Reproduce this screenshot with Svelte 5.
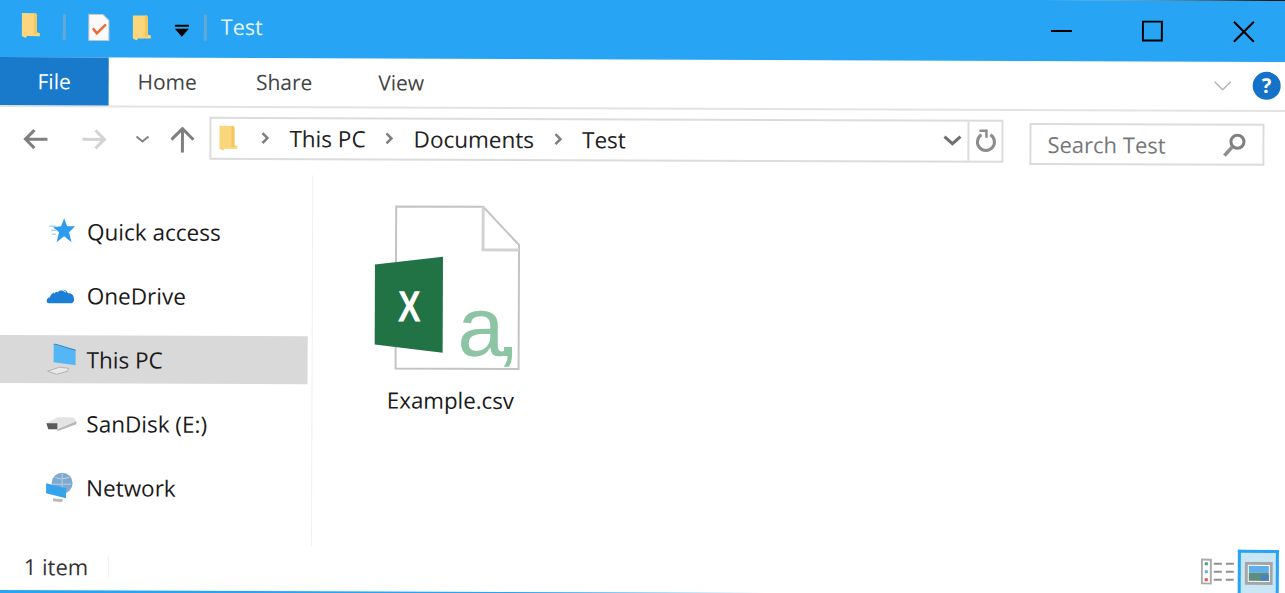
<script>
	const tabs = ['Home', 'Share', 'View'];
	const crumbs = ['This PC', 'Documents', 'Test'];
	const nav = [
		{ label: 'Quick access', icon: 'star' },
		{ label: 'OneDrive', icon: 'cloud' },
		{ label: 'This PC', icon: 'pc', selected: true },
		{ label: 'SanDisk (E:)', icon: 'drive' },
		{ label: 'Network', icon: 'net' }
	];
</script>

{#snippet folder(w, h)}
	<svg width={w} height={h} viewBox="0 0 20 26">
		<path d="M1 1h14l1 2v17l3 1v3H6l-1 2-4-2z" fill="#fbd67c" />
		<path d="M13 1h2l1 2v19h-3z" fill="#f4c65e" />
	</svg>
{/snippet}

{#snippet navIcon(name)}
	{#if name === 'star'}
		<svg width="30" height="28" viewBox="0 0 30 28">
			<path d="M18 1l3 8 8 0-6 6 2.500 10-7.500-6-7.500 6 2.500-10-6-5 8-1z" fill="#2d9cee" />
			<path d="M3 9h7M5 13h5M6 17h4" stroke="#a9d7f7" stroke-width="1.500" />
		</svg>
	{:else if name === 'cloud'}
		<svg width="30" height="20" viewBox="0 0 30 20">
			<path d="M3 18c-3 0-3-5 1-6 1-4 5-6 8-5 3-4 9-3 10 1 4 0 6 2 6 5 1 3-1 5-3 5z" fill="#1b7fd8" />
			<path d="M8 8c3-4 8-5 12-1" fill="none" stroke="#fff" stroke-width="1" />
		</svg>
	{:else if name === 'pc'}
		<svg width="32" height="32" viewBox="0 0 32 32">
			<path d="M8 1l22 6v15L8 19z" fill="#55b6f5" />
			<path d="M8 1l2 0 20 6" stroke="#2d85c4" fill="none" />
			<path d="M2 28l12-4 9 1-1 3-11 3z" fill="#e9e9e9" stroke="#a9a9a9" stroke-width=".8" />
		</svg>
	{:else if name === 'drive'}
		<svg width="32" height="18" viewBox="0 0 32 18">
			<path d="M1 9l11-6h16l3 4-19 8H4z" fill="#e4e4e4" />
			<path d="M1 9h11v6H3z" fill="#5a5a5a" />
			<path d="M12 15l19-8v3l-19 7z" fill="#b8b8b8" />
		</svg>
	{:else}
		<svg width="30" height="30" viewBox="0 0 30 30">
			<circle cx="17" cy="11" r="10.500" fill="#7fa9cf" />
			<path d="M10 5c4 2 9 2 14 0M7 12h19M17 1v20" stroke="#b4cde3" fill="none" />
			<path d="M1 11l20 5v10L1 21z" fill="#34a3ee" />
			<path d="M8 26l10 1-1 3-9-1z" fill="#b9b9b9" />
		</svg>
	{/if}
{/snippet}

<div class="window">
	<header class="titlebar">
		<span class="qa-folder">{@render folder(20, 26)}</span>
		<i class="sep first"></i>
		<svg class="props" width="24" height="28" viewBox="0 0 24 28">
			<path d="M2 1h14l6 6v20H2z" fill="#fafafa" stroke="#c8c8c8" />
			<path d="M6 15l4 5 9-9" fill="none" stroke="#ef6b35" stroke-width="2.500" />
		</svg>
		<span class="qa-folder second">{@render folder(20, 26)}</span>
		<svg class="dropdown" width="16" height="14" viewBox="0 0 16 14">
			<path d="M1 1h14v2H1zM1 5h14l-7 8z" fill="#000" />
		</svg>
		<i class="sep"></i>
		<span class="title">Test</span>
		<div class="controls">
			<svg width="22" height="4" viewBox="0 0 22 4"><path d="M0 2h21" stroke="#000" stroke-width="2" /></svg>
			<svg width="22" height="22" viewBox="0 0 22 22"><rect x="1" y="1" width="19" height="19" fill="none" stroke="#000" stroke-width="2" /></svg>
			<svg width="22" height="22" viewBox="0 0 22 22"><path d="M1 1l20 20M21 1L1 21" stroke="#000" stroke-width="2" /></svg>
		</div>
	</header>

	<nav class="ribbon">
		<div class="file-tab">File</div>
		{#each tabs as tab}
			<div class="tab">{tab}</div>
		{/each}
		<svg class="collapse" width="18" height="10" viewBox="0 0 18 10">
			<path d="M1 1l8 8 8-8" fill="none" stroke="#b5b5b5" stroke-width="1.500" />
		</svg>
		<div class="help">?</div>
	</nav>

	<div class="addressrow">
		<svg width="26" height="22" viewBox="0 0 26 22" class="arrow back">
			<path d="M25 11H3M12 2l-9 9 9 9" fill="none" stroke="#7f7f7f" stroke-width="3" />
		</svg>
		<svg width="26" height="22" viewBox="0 0 26 22" class="arrow forward">
			<path d="M1 11h22M14 2l9 9-9 9" fill="none" stroke="#d4d4d4" stroke-width="3" />
		</svg>
		<svg width="14" height="8" viewBox="0 0 14 8" class="arrow recent">
			<path d="M1 1l6 5 6-5" fill="none" stroke="#808080" stroke-width="2" />
		</svg>
		<svg width="24" height="26" viewBox="0 0 24 26" class="arrow up">
			<path d="M12 26V3M1 13L12 2l11 11" fill="none" stroke="#7f7f7f" stroke-width="3" />
		</svg>
		<div class="address">
			<span class="addr-folder">{@render folder(20, 26)}</span>
			{#each crumbs as crumb}
				<svg class="chev" width="10" height="12" viewBox="0 0 10 12"><path d="M2 1l5 5-5 5" fill="none" stroke="#7f7f7f" stroke-width="2.500" /></svg>
				<span class="crumb">{crumb}</span>
			{/each}
			<svg class="addr-drop" width="20" height="12" viewBox="0 0 20 12">
				<path d="M2 2l8 7 8-7" fill="none" stroke="#6f6f6f" stroke-width="3" />
			</svg>
			<div class="refresh">
				<svg width="22" height="24" viewBox="0 0 22 24">
					<path d="M7 6a8.500 8.500 0 1 0 9 0" fill="none" stroke="#8c8c8c" stroke-width="3" />
					<path d="M5 2h7v7" fill="none" stroke="#8c8c8c" stroke-width="2.500" />
				</svg>
			</div>
		</div>
		<div class="search">
			<span>Search Test</span>
			<svg width="24" height="26" viewBox="0 0 24 26">
				<circle cx="15" cy="10" r="6.500" fill="none" stroke="#7f7f7f" stroke-width="3" />
				<path d="M10 15l-8 9" stroke="#8f8f8f" stroke-width="3.500" />
			</svg>
		</div>
	</div>

	<main class="body">
		<aside class="sidebar">
			{#each nav as item}
				<div class="nav-item" class:selected={item.selected}>
					<span class="nav-icon">{@render navIcon(item.icon)}</span>
					<span>{item.label}</span>
				</div>
			{/each}
		</aside>
		<section class="files">
			<div class="file">
				<svg width="150" height="180" viewBox="0 0 150 180">
					<path d="M24 5h87l36 38v124H24z" fill="#fff" stroke="#c4c4c4" stroke-width="2" />
					<path d="M111 5v43h36" fill="none" stroke="#d2d2d2" stroke-width="3" />
					<path d="M3 63l68-8v96l-68-8z" fill="#217346" />
					<text x="26" y="120" textLength="23" lengthAdjust="spacingAndGlyphs" class="xl">X</text>
					<text x="86" y="154" class="glyph">a,</text>
				</svg>
				<div class="file-name">Example.csv</div>
			</div>
		</section>
	</main>

	<footer class="status">
		<span class="count">1 item</span>
		<i class="status-sep"></i>
		<div class="views">
			<svg class="list-view" width="34" height="28" viewBox="0 0 34 28">
				<rect x="1" y="3" width="9" height="24" fill="#fff" stroke="#aaa" stroke-width="2" />
				<path d="M4 7h3" stroke="#4d9a78" stroke-width="3" />
				<path d="M4 15h3" stroke="#6aa7ee" stroke-width="3" />
				<path d="M4 23h3" stroke="#e64a4a" stroke-width="3" />
				<path d="M13 7h8M25 7h8M13 15h8M25 15h8M13 23h8M25 23h8" stroke="#909090" stroke-width="2" />
			</svg>
			<div class="view-active">
				<svg width="28" height="24" viewBox="0 0 28 24">
					<rect x="1.500" y="1.500" width="25" height="20" fill="#fff" stroke="#a5a5a5" stroke-width="3" />
					<rect x="4" y="4" width="20" height="7" fill="#5fb0e8" />
					<rect x="4" y="11" width="20" height="8" fill="#5f8d7f" />
					<rect x="16" y="13" width="8" height="6" fill="#4a83bb" />
				</svg>
			</div>
		</div>
	</footer>
	<div class="bottom-edge"></div>
</div>

<style>
	:global(html),
	:global(body) {
		margin: 0;
		height: 100%;
		overflow: hidden;
		background: #111;
	}

	/* the screenshot sits slightly crooked, right side lower */
	.window {
		width: 1292px;
		height: 598px;
		transform-origin: 0 0;
		transform: translateY(-4px) rotate(0.22deg);
		display: flex;
		flex-direction: column;
		font-family: 'Open Sans', 'Noto Sans', sans-serif;
		color: #1a1a1a;
		background: #fff;
	}

	.titlebar {
		height: 61px;
		flex: none;
		display: flex;
		align-items: center;
		padding-left: 21px;
		box-sizing: border-box;
		background: #27a4f3;
	}

	.qa-folder {
		display: flex;
		margin-top: -3px;
	}

	.qa-folder.second {
		margin-left: 21px;
		margin-top: 0;
	}

	.sep {
		width: 3px;
		height: 26px;
		margin-left: 14px;
		background: #63a9d8;
	}

	.sep.first {
		margin-left: 22px;
	}

	.props {
		margin-left: 21px;
		margin-top: 1px;
	}

	.dropdown {
		margin-left: 22px;
		margin-top: 7px;
	}

	.title {
		margin-left: 14px;
		margin-top: -3px;
		font-size: 21.500px;
		color: #e3f3ff;
	}

	.controls {
		margin-left: auto;
		display: flex;
		align-items: center;
		gap: 69px;
		padding-right: 37px;
	}

	.ribbon {
		height: 50px;
		flex: none;
		display: flex;
		align-items: center;
		box-sizing: border-box;
		border-bottom: 2px solid #e3e3e3;
		font-size: 21px;
		color: #444;
	}

	.file-tab {
		width: 109px;
		height: 48px;
		display: flex;
		align-items: center;
		justify-content: center;
		background: #1979ca;
		color: #fff;
	}

	.tab {
		width: 117px;
		text-align: center;
	}

	.tab:last-of-type {
		margin-left: -12px;
	}

	.collapse {
		margin-left: auto;
		margin-right: 21px;
	}

	.help {
		width: 28px;
		height: 28px;
		margin-right: 11px;
		border-radius: 50%;
		background: #1472c8;
		color: #fff;
		text-align: center;
		font-weight: 700;
		font-size: 20px;
		line-height: 28px;
	}

	.addressrow {
		height: 60px;
		flex: none;
		display: flex;
		align-items: center;
		padding: 0 21px 0 23px;
		box-sizing: border-box;
	}

	.arrow {
		margin-top: 4px;
	}

	.forward {
		margin-left: 33px;
	}

	.recent {
		margin-left: 28px;
	}

	.up {
		margin-left: 21px;
	}

	.address {
		margin-left: 15px;
		width: 794px;
		height: 43px;
		box-sizing: border-box;
		border: 2px solid #dcdcdc;
		display: flex;
		align-items: center;
		font-size: 22.500px;
		color: #222;
	}

	.addr-folder {
		display: flex;
		margin-left: 7px;
		margin-right: 22px;
	}

	.chev {
		flex: none;
	}

	.crumb {
		margin: 0 19px;
	}

	.addr-drop {
		margin-left: auto;
		margin-right: 5px;
	}

	.refresh {
		width: 32px;
		height: 100%;
		display: flex;
		align-items: center;
		justify-content: center;
		border-left: 2px solid #dcdcdc;
	}

	.search {
		margin-left: 26px;
		width: 235px;
		height: 42px;
		margin-top: 5px;
		box-sizing: border-box;
		border: 2px solid #dcdcdc;
		display: flex;
		align-items: center;
		justify-content: space-between;
		padding: 0 16px;
		font-size: 22px;
		color: #777;
	}

	.body {
		flex: none;
		height: 378px;
		display: flex;
	}

	.sidebar {
		width: 314px;
		flex: none;
		box-sizing: border-box;
		margin-top: 7px;
		padding-top: 33px;
		padding-right: 4px;
		border-right: 1px solid #f0f0f0;
		display: flex;
		flex-direction: column;
		gap: 16px;
		font-size: 22.500px;
	}

	.nav-item {
		height: 48px;
		display: flex;
		align-items: center;
		padding-left: 47px;
	}

	.nav-item.selected {
		background: #d9d9d9;
	}

	.nav-icon {
		width: 41px;
		display: flex;
		align-items: center;
	}

	.files {
		flex: 1;
		padding: 33px 0 0 54px;
	}

	.file {
		width: 160px;
		display: flex;
		flex-direction: column;
		align-items: center;
	}

	.xl {
		font: 700 44px 'Liberation Sans', sans-serif;
		fill: #fff;
	}

	.glyph {
		font: 400 84px 'Liberation Sans', sans-serif;
		letter-spacing: -8px;
		fill: #8cc4a4;
	}

	.file-name {
		font-size: 22.300px;
		margin: 3px 0 0 8px;
	}

	.status {
		height: 45px;
		flex: none;
		display: flex;
		align-items: center;
		padding: 0 11px 0 26px;
		font-size: 22px;
		color: #333;
		box-sizing: border-box;
	}

	.count {
		margin-top: -4px;
	}

	.status-sep {
		width: 1px;
		height: 22px;
		margin: -4px 0 0 20px;
		background: #f0f0f0;
	}

	.views {
		margin-left: auto;
		display: flex;
		align-items: center;
		align-self: stretch;
		gap: 3px;
	}

	.list-view {
		margin-top: -4px;
	}

	.view-active {
		width: 41px;
		box-sizing: border-box;
		align-self: stretch;
		border: 3px solid #27a4f3;
		border-bottom: 0;
		background: #c8e6f6;
		display: flex;
		justify-content: center;
		padding-top: 9px;
	}

	.bottom-edge {
		height: 4px;
		flex: none;
		border-bottom: 1px solid #222;
		box-sizing: border-box;
		background: linear-gradient(90deg, #27a4f3 0, #27a4f3 60%, #ffffff 100%);
	}
</style>
